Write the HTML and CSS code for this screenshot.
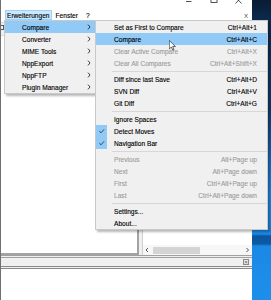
FILE: index.html
```html
<!DOCTYPE html>
<html>
<head>
<meta charset="utf-8">
<link rel="stylesheet" href="styles.css">
</head>
<body>
<div class="screen">
  <div class="app">
    <div class="titlebar">
      <svg class="ctl" viewBox="0 0 25 10"><path d="M10 1.5H15.5" stroke="#222" stroke-width="0.8" fill="none"/></svg>
      <svg class="ctl" viewBox="0 0 25 10"><rect x="10" y="-4" width="6" height="6.5" stroke="#222" stroke-width="0.8" fill="none"/></svg>
      <svg class="ctl" viewBox="0 0 25 10"><path d="M9.5 -3L15.5 3.5M15.5 -3L9.5 3.5" stroke="#222" stroke-width="0.8" fill="none"/></svg>
    </div>
    <div class="menubar">
      <span class="mb-item active">Erweiterungen</span>
      <span class="mb-item">Fenster</span>
      <span class="mb-item">?</span>
      <span class="mb-close">X</span>
    </div>
    <div class="toolbar"><span class="tb-icon"></span></div>
    <div class="workspace">
      <div class="pane-left"></div>
      <div class="splitter"></div>
      <div class="pane-right">
        <div class="pane-body"></div>
        <div class="hscroll">
          <svg class="sarrow" viewBox="0 0 9 10"><path d="M5 3L3 5L5 7" stroke="#444" stroke-width="0.9" fill="none"/></svg>
          <div class="track"><div class="thumb"></div></div>
          <svg class="sarrow" viewBox="0 0 9 10"><path d="M3.5 3L5.5 5L3.5 7" stroke="#444" stroke-width="0.9" fill="none"/></svg>
        </div>
      </div>
    </div>
    <div class="panelbar"><span class="panel-close">×</span></div>
    <div class="panel"></div>
  </div>
  <div class="desktop"></div>

  <div class="menu sub1">
    <div class="mi hl"><span>Compare</span><svg class="arr" viewBox="0 0 4 6"><path d="M1 0.6L3 3L1 5.4" stroke="#111" stroke-width="0.8" fill="none"/></svg></div>
    <div class="mi"><span>Converter</span><svg class="arr" viewBox="0 0 4 6"><path d="M1 0.6L3 3L1 5.4" stroke="#111" stroke-width="0.8" fill="none"/></svg></div>
    <div class="mi"><span>MIME Tools</span><svg class="arr" viewBox="0 0 4 6"><path d="M1 0.6L3 3L1 5.4" stroke="#111" stroke-width="0.8" fill="none"/></svg></div>
    <div class="mi"><span>NppExport</span><svg class="arr" viewBox="0 0 4 6"><path d="M1 0.6L3 3L1 5.4" stroke="#111" stroke-width="0.8" fill="none"/></svg></div>
    <div class="mi"><span>NppFTP</span><svg class="arr" viewBox="0 0 4 6"><path d="M1 0.6L3 3L1 5.4" stroke="#111" stroke-width="0.8" fill="none"/></svg></div>
    <div class="mi"><span>Plugin Manager</span><svg class="arr" viewBox="0 0 4 6"><path d="M1 0.6L3 3L1 5.4" stroke="#111" stroke-width="0.8" fill="none"/></svg></div>
  </div>

  <div class="menu sub2">
    <div class="mi"><span class="chk"></span><span class="lbl">Set as First to Compare</span><span class="sc">Ctrl+Alt+1</span></div>
    <div class="mi hl"><span class="chk"></span><span class="lbl">Compare</span><span class="sc">Ctrl+Alt+C</span></div>
    <div class="mi dis"><span class="chk"></span><span class="lbl">Clear Active Compare</span><span class="sc">Ctrl+Alt+X</span></div>
    <div class="mi dis"><span class="chk"></span><span class="lbl">Clear All Compares</span><span class="sc">Ctrl+Alt+Shift+X</span></div>
    <div class="sep"></div>
    <div class="mi"><span class="chk"></span><span class="lbl">Diff since last Save</span><span class="sc">Ctrl+Alt+D</span></div>
    <div class="mi"><span class="chk"></span><span class="lbl">SVN Diff</span><span class="sc">Ctrl+Alt+V</span></div>
    <div class="mi"><span class="chk"></span><span class="lbl">Git Diff</span><span class="sc">Ctrl+Alt+G</span></div>
    <div class="sep"></div>
    <div class="mi"><span class="chk"></span><span class="lbl">Ignore Spaces</span></div>
    <div class="mi"><span class="chk on"><svg viewBox="0 0 11 12"><path d="M3.3 6.2L5 7.8L8 4.4" stroke="#2b3a4a" stroke-width="0.9" fill="none"/></svg></span><span class="lbl">Detect Moves</span></div>
    <div class="mi"><span class="chk on"><svg viewBox="0 0 11 12"><path d="M3.3 6.2L5 7.8L8 4.4" stroke="#2b3a4a" stroke-width="0.9" fill="none"/></svg></span><span class="lbl">Navigation Bar</span></div>
    <div class="sep"></div>
    <div class="mi dis"><span class="chk"></span><span class="lbl">Previous</span><span class="sc">Alt+Page up</span></div>
    <div class="mi dis"><span class="chk"></span><span class="lbl">Next</span><span class="sc">Alt+Page down</span></div>
    <div class="mi dis"><span class="chk"></span><span class="lbl">First</span><span class="sc">Ctrl+Alt+Page up</span></div>
    <div class="mi dis"><span class="chk"></span><span class="lbl">Last</span><span class="sc">Ctrl+Alt+Page down</span></div>
    <div class="sep"></div>
    <div class="mi"><span class="chk"></span><span class="lbl">Settings...</span></div>
    <div class="mi"><span class="chk"></span><span class="lbl">About...</span></div>
  </div>

  <svg class="cursor" viewBox="0 0 12 18"><path d="M0.5 0.5V15L4 11.6L6.4 17L8.6 16L6.3 10.7H11Z" fill="#fff" stroke="#000" stroke-width="1"/></svg>
</div>
</body>
</html>
```

FILE: styles.css
```css
* { box-sizing: border-box; margin: 0; padding: 0; }
html, body { width: 271px; height: 300px; overflow: hidden; }
body {
  font-family: "Liberation Sans", Arial, sans-serif;
  font-size: 6.6px;
  color: #000;
  background: #fff;
}
.screen { position: relative; width: 271px; height: 300px; display: flex; }

.app {
  width: 252px;
  height: 300px;
  display: flex;
  flex-direction: column;
  background: #fff;
  border-left: 1px solid #707070;
}
.desktop {
  width: 19px;
  height: 300px;
  background: linear-gradient(180deg, #0a1c33 0px, #0c2a4f 20px, #0f3d72 110px, #1572c8 165px, #1a89e6 195px, #1a89e6 234px, #0c559f 236px, #0d5aa6 244px, #1a89e6 246px, #1d8fea 300px);
}

.titlebar { height: 10px; display: flex; justify-content: flex-end; padding-right: 1px; }
.ctl { width: 25px; height: 10px; display: block; }

.menubar { height: 12px; display: flex; align-items: flex-start; -webkit-text-stroke: 0.12px #000; }
.mb-item {
  height: 10px;
  line-height: 9px;
  padding: 0 3px;
  border: 1px solid transparent;
  white-space: nowrap;
}
.mb-item.active { margin-left: 4px; padding: 0 1px; background: #cce8ff; border-color: #99d1ff; }
.mb-close { margin-left: auto; margin-right: 4px; margin-top: 2px; font-size: 6px; color: #444; line-height: 8px; -webkit-text-stroke: 0; }

.toolbar { height: 14px; background: #f0f0f0; border-top: 1px solid #dcdcdc; border-bottom: 1px solid #dcdcdc; padding-top: 2px; }
.tb-icon { display: block; width: 3px; height: 5px; border: 1px solid #555; border-left: none; }

.workspace { height: 219px; display: flex; }
.pane-left { width: 138px; background: #fff; border-right: 2px solid #a3a3a3; border-bottom: 2px solid #a3a3a3; }
.splitter { width: 3px; background: #f0f0f0; }
.pane-right { flex: 1; display: flex; flex-direction: column; border-left: 1px solid #d0d0d0; }
.pane-body { flex: 1; background: #fff; }
.hscroll { height: 10px; display: flex; align-items: center; background: #f7f7f7; }
.sarrow { width: 9px; height: 10px; display: block; flex: none; }
.track { flex: 1; height: 7px; }
.thumb {
  width: 47px; height: 7px; margin-left: 1px;
  background: #d4d4d4;
  background-image: radial-gradient(#c4c4c4 30%, transparent 31%);
  background-size: 2px 2px;
}

.panelbar {
  height: 14px;
  background: #f0f0f0;
  border-top: 3px double #a0a0a0;
  border-bottom: 3px double #8a8a8a;
  display: flex;
  justify-content: flex-end;
  align-items: center;
  padding-right: 3px;
}
.panel-close {
  width: 6px; height: 6px;
  border: 1px solid #8a8a8a;
  font-size: 6px; line-height: 4px;
  text-align: center; color: #555;
  background: #e8e8e8;
}
.panel { flex: 1; background: #fff; }

.menu {
  position: absolute;
  background: #f0f0f0;
  border: 1px solid #c9c9c9;
  box-shadow: 2px 2px 2px rgba(0, 0, 0, 0.28);
  -webkit-text-stroke: 0.12px currentColor;
}
.sub1 { left: 4px; top: 20px; width: 92px; }
.sub2 { left: 95px; top: 20px; width: 173px; }

.mi { height: 12px; display: flex; align-items: center; white-space: nowrap; }
.hl { background: #91c9f7; }
.dis { color: #9d9d9d; }

.sub1 .mi { padding-left: 17px; padding-right: 4px; justify-content: space-between; }
.arr { width: 4px; height: 6px; display: block; }

.chk { width: 11px; height: 12px; flex: none; display: block; }
.chk svg { width: 11px; height: 12px; display: block; }
.chk.on { background: #91c9f7; }
.lbl { flex: 1; padding-left: 7px; }
.sc { padding-right: 10px; }

.sep {
  height: 4px;
  margin-left: 16px;
  background: linear-gradient(#d7d7d7, #d7d7d7) no-repeat 0 2px / 100% 1px;
}

.cursor { position: absolute; left: 169px; top: 40px; width: 7px; height: 11px; }
```
